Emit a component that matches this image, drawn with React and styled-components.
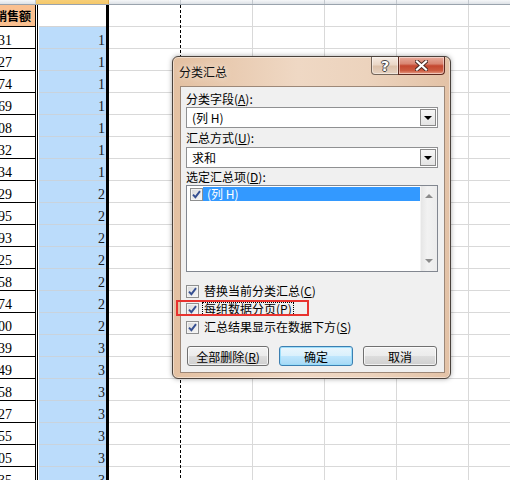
import React from 'react';
import styled, { createGlobalStyle } from 'styled-components';

const Global = createGlobalStyle`
  html, body { margin: 0; padding: 0; background: #fff; }
  body { overflow: hidden; width: 510px; height: 480px; }
  * { box-sizing: border-box; }
`;

const UI_FONT = `"Noto Sans CJK SC", "Noto Sans", sans-serif`;

const Sheet = styled.div`
  position: relative;
  width: 510px;
  height: 480px;
  overflow: hidden;
  display: flex;
  flex-direction: column;
  background: #fff;
`;

const HeaderBar = styled.div`
  height: 5px;
  flex: none;
  overflow: hidden;
  border-bottom: 1px solid #9aa3ad;
  background: linear-gradient(#f6f7f9, #dde1e6);
`;

const HeaderInner = styled.div`
  display: grid;
  grid-template-columns: 36px 73px repeat(6, 72px);
  height: 18px;
  margin-top: -14px;
`;

const HeaderCell = styled.div`
  height: 18px;
  line-height: 18px;
  text-align: center;
  font: 11px "Liberation Sans", sans-serif;
  color: #27415f;
  border-right: 1px solid ${p => (p.$selected ? '#e2a94a' : '#c3c8ce')};
  background: ${p => (p.$selected ? 'linear-gradient(#fbe3a8, #f5c86a)' : 'transparent')};
`;

const Row = styled.div`
  display: grid;
  grid-template-columns: 36px 73px repeat(6, 72px);
  height: 22px;
  flex: none;
`;

const GCell = styled.div`
  border-right: 1px solid #000;
  border-bottom: 1px solid #000;
  background: ${p => (p.$head ? '#fac090' : '#fff')};
  display: flex;
  align-items: ${p => (p.$head ? 'center' : 'flex-end')};
  justify-content: flex-end;
  padding-right: ${p => (p.$head ? '4px' : '23px')};
  overflow: hidden;
  white-space: nowrap;
  font: ${p => (p.$head ? `bold 12px ${UI_FONT}` : `14px "Liberation Serif", serif`)};
  line-height: 14px;
  color: #000;
`;

const HCell = styled.div`
  display: flex;
  padding-left: 3px;
  border-right: 3px solid #000;
  background: linear-gradient(to right, #fff 0 1px, #000 1px 2px, #fff 2px);
`;

const HFill = styled.div`
  flex: 1;
  display: flex;
  align-items: flex-end;
  justify-content: flex-end;
  padding-right: 1px;
  background: ${p => (p.$selected ? '#bbdcfb' : '#fff')};
  border-bottom: 1px solid ${p => (p.$selected ? '#c9d3dc' : '#d4d4d4')};
  font: 14px "Liberation Serif", serif;
  line-height: 14px;
  color: #1b1b1b;
`;

const GridCell = styled.div`
  border-right: 1px solid ${p => (p.$pageBreak ? 'transparent' : '#d9d9d9')};
  border-bottom: 1px solid #d9d9d9;
`;

const PageBreak = styled.div`
  position: absolute;
  left: 180px;
  top: 5px;
  bottom: 0;
  width: 1px;
  background: repeating-linear-gradient(to bottom, #000 0 3px, transparent 3px 5px);
`;

/* ---------- Dialog ---------- */

const Dialog = styled.div`
  position: absolute;
  left: 172px;
  top: 56px;
  width: 279px;
  height: 323px;
  border: 1px solid #4a423c;
  border-radius: 6px;
  padding: 0 5px 5px 7px;
  display: flex;
  flex-direction: column;
  background: linear-gradient(to right, #e3c0a1 0%, #efd8c4 45%, #ecd3bd 70%, #e3c2a6 100%);
  box-shadow: 0 0 5px rgba(0, 0, 0, 0.35), inset 0 0 0 1px rgba(255, 255, 255, 0.45);
  font-family: ${UI_FONT};
`;

const TitleBar = styled.div`
  height: 29px;
  flex: none;
  display: flex;
  align-items: flex-start;
`;

const Title = styled.div`
  flex: 1;
  align-self: center;
  margin-left: -1px;
  font-size: 12px;
  color: #111;
  text-shadow: 0 0 6px rgba(255, 255, 255, 0.9);
`;

const CaptionButton = styled.div`
  height: 18px;
  width: ${p => (p.$close ? '47px' : '28px')};
  display: flex;
  align-items: center;
  justify-content: center;
  border: 1px solid ${p => (p.$close ? '#5e2a20' : '#73655a')};
  border-top: none;
  margin-left: ${p => (p.$close ? '-1px' : '0')};
  border-radius: ${p => (p.$close ? '0 0 4px 0' : '0 0 0 4px')};
  background: ${p =>
    p.$close
      ? 'linear-gradient(#e9ac9c 0%, #d98571 40%, #c4472f 52%, #cc5b40 80%, #e7a088 100%)'
      : 'linear-gradient(#f6ebe2 0%, #ead7c7 45%, #dcc1aa 55%, #e6d2c1 100%)'};
  box-shadow: inset 0 0 0 1px rgba(255, 255, 255, 0.45);
`;

const HelpGlyph = styled.span`
  font: bold 14px "DejaVu Sans", sans-serif;
  line-height: 14px;
  color: #fff;
  text-shadow: 1px 0 0 #454545, -1px 0 0 #454545, 0 1px 0 #454545, 0 -1px 0 #454545;
`;

const Client = styled.div`
  flex: 1;
  border: 1px solid #9d8878;
  background: #f0f0f0;
  display: flex;
  flex-direction: column;
  padding: 0 6px 0 5px;
  font-size: 12px;
  color: #000;
`;

const Label = styled.div`
  margin-top: ${p => p.$mt || 0}px;
  line-height: ${p => p.$lh || 16}px;
  height: ${p => p.$lh || 16}px;
  white-space: nowrap;
`;

const Combo = styled.div`
  height: 21px;
  flex: none;
  border: 1px solid #8f9092;
  background: #fff;
  display: flex;
  align-items: center;
  padding: 0 1px 0 5px;
`;

const ComboText = styled.div`
  flex: 1;
  line-height: 17px;
`;

const DropButton = styled.div`
  width: 16px;
  height: 17px;
  border: 1px solid #8a8a8a;
  background: linear-gradient(#f7f7f7, #e4e4e4);
  display: flex;
  align-items: center;
  justify-content: center;
`;

const Triangle = styled.div`
  width: 0;
  height: 0;
  border-left: 4px solid transparent;
  border-right: 4px solid transparent;
  border-${p => (p.$up ? 'bottom' : 'top')}: 4px solid ${p => p.$color || '#000'};
`;

const ListBox = styled.div`
  height: 87px;
  flex: none;
  border: 1px solid #828790;
  background: #fff;
  display: flex;
`;

const ListItems = styled.div`
  flex: 1;
  padding: 1px 0 0 3px;
`;

const ListItem = styled.div`
  height: 14px;
  display: flex;
  align-items: center;
`;

const ItemText = styled.div`
  flex: 1;
  height: 14px;
  line-height: 14px;
  background: #3399ff;
  color: #fff;
  padding-left: 4px;
`;

const ScrollBar = styled.div`
  width: 17px;
  flex: none;
  background: linear-gradient(to right, #e6e6e6, #f2f2f2 40%, #ececec);
  border-left: 1px solid #f4f4f4;
  display: flex;
  flex-direction: column;
  justify-content: space-between;
  align-items: center;
  padding: 8px 0 8px;
`;

const CheckRow = styled.div`
  height: 16px;
  margin-top: ${p => p.$mt || 0}px;
  display: flex;
  align-items: center;
  white-space: nowrap;
`;

const Box = styled.div`
  width: 13px;
  height: 13px;
  flex: none;
  border: 1px solid #8e8f8f;
  background: linear-gradient(135deg, #d9d9d9, #f7f7f7);
  box-shadow: inset 0 0 0 1px #f4f4f4;
  display: flex;
  align-items: center;
  justify-content: center;
  margin-right: ${p => p.$mr ?? 4}px;
`;

const CheckLabel = styled.span`
  line-height: 12px;
  padding: 0 1px;
  outline: ${p => (p.$focus ? '1px dotted #000' : 'none')};
  outline-offset: 0;
`;

const ButtonRow = styled.div`
  margin-top: 11px;
  margin-left: 1px;
  margin-right: 1px;
  display: flex;
  justify-content: space-between;
`;

const Button = styled.div`
  width: ${p => p.$w}px;
  height: 20px;
  border: 1px solid ${p => (p.$default ? '#3c7fb1' : '#707070')};
  border-radius: 3px;
  display: flex;
  align-items: center;
  justify-content: center;
  background: ${p =>
    p.$default
      ? 'linear-gradient(#eaf6fd 0%, #d9f0fc 50%, #bee6fd 51%, #a7d9f5 100%)'
      : 'linear-gradient(#f2f2f2 0%, #ebebeb 50%, #dddddd 51%, #cfcfcf 100%)'};
  box-shadow: inset 0 0 0 1px ${p => (p.$default ? 'rgba(150,220,250,0.9)' : 'rgba(255,255,255,0.7)')};
  white-space: nowrap;
`;

const RedMark = styled.div`
  position: absolute;
  left: 3px;
  top: 243px;
  width: 133px;
  height: 16px;
  border: 2px solid #e8332f;
  pointer-events: none;
`;

const Check = () => (
  <svg width="9" height="9" viewBox="0 0 9 9">
    <path d="M1 4.6 L3.4 7.2 L8 1.2" fill="none" stroke="#354f91" strokeWidth="1.9" />
  </svg>
);

const CloseX = () => (
  <svg width="13" height="11" viewBox="0 0 13 11">
    <path d="M2 1.5 L11 9.5 M11 1.5 L2 9.5" stroke="#4a2a22" strokeWidth="4" strokeLinecap="square" />
    <path d="M2 1.5 L11 9.5 M11 1.5 L2 9.5" stroke="#fff" strokeWidth="2.2" strokeLinecap="square" />
  </svg>
);

const gValues = ['31', '27', '74', '69', '08', '32', '34', '29', '95', '93', '25', '58', '74', '00', '39', '49', '58', '27', '55', '05', '35'];
const hValues = [1, 1, 1, 1, 1, 1, 1, 2, 2, 2, 2, 2, 2, 2, 3, 3, 3, 3, 3, 3, 3];
const letters = ['G', 'H', 'I', 'J', 'K', 'L', 'M', 'N'];

const EmptyCells = () =>
  [0, 1, 2, 3, 4, 5].map(i => <GridCell key={i} $pageBreak={i === 0} />);

export default function App() {
  return (
    <>
      <Global />
      <Sheet>
        <HeaderBar>
          <HeaderInner>
            {letters.map((l, i) => (
              <HeaderCell key={l} $selected={i === 1}>{i === 0 ? '' : l}</HeaderCell>
            ))}
          </HeaderInner>
        </HeaderBar>
        <Row>
          <GCell $head>销售额</GCell>
          <HCell><HFill /></HCell>
          <EmptyCells />
        </Row>
        {gValues.map((g, i) => (
          <Row key={i}>
            <GCell>{g}</GCell>
            <HCell><HFill $selected>{hValues[i]}</HFill></HCell>
            <EmptyCells />
          </Row>
        ))}
        <PageBreak />

        <Dialog>
          <TitleBar>
            <Title>分类汇总</Title>
            <CaptionButton><HelpGlyph>?</HelpGlyph></CaptionButton>
            <CaptionButton $close><CloseX /></CaptionButton>
          </TitleBar>
          <Client>
            <Label $mt={4} $lh={16}>分类字段(<u>A</u>):</Label>
            <Combo>
              <ComboText>(列 H)</ComboText>
              <DropButton><Triangle /></DropButton>
            </Combo>
            <Label $mt={1} $lh={18}>汇总方式(<u>U</u>):</Label>
            <Combo>
              <ComboText>求和</ComboText>
              <DropButton><Triangle /></DropButton>
            </Combo>
            <Label $lh={17}>选定汇总项(<u>D</u>):</Label>
            <ListBox>
              <ListItems>
                <ListItem>
                  <Box $mr={0}><Check /></Box>
                  <ItemText>(列 H)</ItemText>
                </ListItem>
              </ListItems>
              <ScrollBar>
                <Triangle $up $color="#8c8c8c" />
                <Triangle $color="#8c8c8c" />
              </ScrollBar>
            </ListBox>
            <CheckRow $mt={11}>
              <Box><Check /></Box>
              <CheckLabel>替换当前分类汇总(<u>C</u>)</CheckLabel>
            </CheckRow>
            <CheckRow $mt={2}>
              <Box><Check /></Box>
              <CheckLabel $focus>每组数据分页(<u>P</u>)</CheckLabel>
            </CheckRow>
            <CheckRow $mt={2}>
              <Box><Check /></Box>
              <CheckLabel>汇总结果显示在数据下方(<u>S</u>)</CheckLabel>
            </CheckRow>
            <ButtonRow>
              <Button $w={82}>全部删除(<u>R</u>)</Button>
              <Button $w={74} $default>确定</Button>
              <Button $w={74}>取消</Button>
            </ButtonRow>
          </Client>
          <RedMark />
        </Dialog>
      </Sheet>
    </>
  );
}
